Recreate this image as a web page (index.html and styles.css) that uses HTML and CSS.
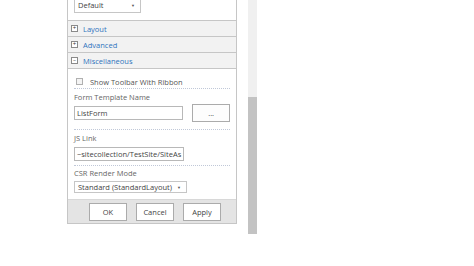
FILE: index.html
```html
<!DOCTYPE html>
<html>
<head>
<meta charset="utf-8">
<link rel="stylesheet" href="styles.css">
</head>
<body>
<div class="page">
  <div class="pane">
    <div class="top">
      <div class="select sel-default"><span>Default</span><span class="arrow">&#9660;</span></div>
    </div>
    <div class="hdr"><span class="box">+</span><span class="hdr-text">Layout</span></div>
    <div class="hdr"><span class="box">+</span><span class="hdr-text">Advanced</span></div>
    <div class="hdr last"><span class="box">&#8211;</span><span class="hdr-text">Miscellaneous</span></div>
    <div class="body">
      <div class="check-row"><span class="cb"></span><span>Show Toolbar With Ribbon</span></div>
      <div class="sep"></div>
      <div class="label">Form Template Name</div>
      <div class="input-row gap-lg">
        <div class="input w110">ListForm</div>
        <div class="btn dots">...</div>
      </div>
      <div class="sep"></div>
      <div class="label">JS Link</div>
      <div class="input-row">
        <div class="input w110">~sitecollection/TestSite/SiteAs</div>
      </div>
      <div class="sep"></div>
      <div class="label short">CSR Render Mode</div>
      <div class="select sel-csr"><span>Standard (StandardLayout)</span><span class="arrow">&#9660;</span></div>
    </div>
    <div class="footer">
      <div class="btn fbtn">OK</div>
      <div class="btn fbtn">Cancel</div>
      <div class="btn fbtn">Apply</div>
    </div>
  </div>
  <div class="scroll">
    <div class="track"></div>
    <div class="thumb"></div>
  </div>
</div>
</body>
</html>
```
FILE: styles.css
```css
html, body {
  margin: 0;
  padding: 0;
  background: #ffffff;
}
body {
  font-family: "Open Sans", "Noto Sans", sans-serif;
  font-size: 7.5px;
  color: #555555;
}
.page {
  display: flex;
  align-items: flex-start;
  height: 266px;
  overflow: hidden;
}
.pane {
  margin-left: 67px;
  margin-top: -3px;
  width: 168px;
  border-left: 1px solid #c6c6c6;
  border-right: 1px solid #c6c6c6;
  border-bottom: 1px solid #c6c6c6;
  background: #ffffff;
}
.top {
  height: 23px;
  padding-left: 6px;
}
.select {
  display: flex;
  align-items: center;
  justify-content: space-between;
  box-sizing: border-box;
  height: 14px;
  border: 1px solid #c6c6c6;
  background: #ffffff;
  padding: 0 5px 0 3px;
  color: #444;
}
.sel-default {
  width: 67px;
  height: 16px;
}
.arrow {
  font-size: 4px;
  color: #555;
}
.hdr {
  display: flex;
  align-items: center;
  height: 15px;
  border-top: 1px solid #c6c6c6;
  background: #f2f2f2;
  padding-left: 3px;
}
.hdr.last {
  border-bottom: 1px solid #c6c6c6;
}
.box {
  box-sizing: border-box;
  width: 7px;
  height: 7px;
  border: 1px solid #8a8a8a;
  background: #fff;
  font-size: 6px;
  line-height: 4px;
  text-align: center;
  color: #333;
  overflow: hidden;
  margin-right: 5px;
}
.hdr-text {
  color: #2f74bd;
  font-size: 7.5px;
}
.body {
  padding: 6px 6px 6px 6px;
}
.check-row {
  display: flex;
  align-items: center;
  height: 13px;
  padding-left: 2px;
}
.cb {
  box-sizing: border-box;
  width: 7px;
  height: 7px;
  border: 1px solid #b0b0b0;
  background: #f4f4f4;
  margin-right: 7px;
}
.sep {
  height: 0;
  border-top: 1px dotted #c0c8d8;
}
.label {
  height: 16px;
  line-height: 16px;
  color: #666;
}
.label.short {
  height: 15px;
  line-height: 15px;
}
.input-row {
  display: flex;
  align-items: center;
  gap: 9px;
  height: 16px;
  margin-bottom: 3px;
}
.input-row.gap-lg {
  margin-bottom: 8px;
}
.input {
  box-sizing: border-box;
  height: 14px;
  border: 1px solid #b8b8b8;
  padding: 0 2px;
  line-height: 12px;
  white-space: nowrap;
  overflow: hidden;
  color: #444;
}
.w110 {
  width: 110px;
}
.btn {
  box-sizing: border-box;
  border: 1px solid #ababab;
  background: #fdfdfd;
  display: flex;
  align-items: center;
  justify-content: center;
  color: #444;
}
.dots {
  width: 38px;
  height: 18px;
}
.sel-csr {
  width: 113px;
  height: 12px;
}
.footer {
  display: flex;
  justify-content: flex-end;
  align-items: center;
  gap: 9px;
  height: 23px;
  padding-right: 15px;
  background: #e4e4e4;
  border-top: 1px solid #d8d8d8;
}
.fbtn {
  width: 38px;
  height: 18px;
  background: #ffffff;
}
.scroll {
  margin-left: 11px;
  width: 9px;
  height: 234px;
  display: flex;
  flex-direction: column;
}
.track {
  height: 97px;
  background: #f0f0f0;
}
.thumb {
  flex: 1;
  background: #c3c3c3;
}
```
